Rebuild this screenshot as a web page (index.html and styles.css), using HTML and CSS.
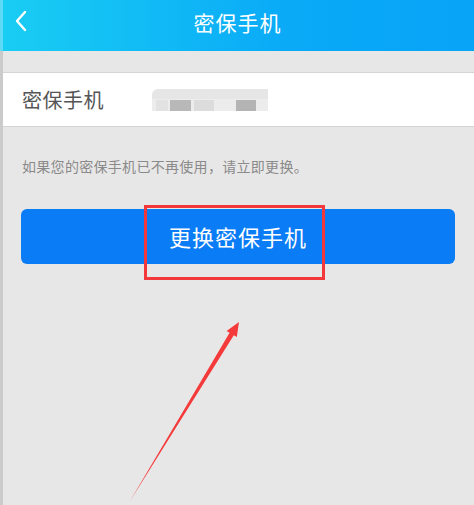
FILE: index.html
```html
<!DOCTYPE html>
<html>
    <head>
        <title>密保手机</title>
        <meta charset="UTF-8">
        <link rel="stylesheet" href="styles.css">
    </head>
    <body>
        <div class="page">
            <div class="header">
                <svg class="back" width="14" height="22" viewBox="0 0 14 22">
                    <polyline points="11,2 3,11 11,20" fill="none" stroke="#fff" stroke-width="2.4" stroke-linecap="round" stroke-linejoin="round"/>
                </svg>
                <span class="title">密保手机</span>
            </div>
            <div class="content">
                <div class="row">
                    <span class="label">密保手机</span>
                    <span class="blur"><i class="b1"></i><i class="b2"></i><i class="b3"></i><i class="b4"></i></span>
                </div>
                <p class="tip">如果您的密保手机已不再使用，请立即更换。</p>
                <button class="change">更换密保手机</button>
            </div>
            <!-- annotation drawn over the screenshot -->
            <svg class="marks" width="474" height="505" viewBox="0 0 474 505">
                <rect x="145.5" y="206.5" width="178" height="72" fill="none" stroke="#f2383b" stroke-width="3"/>
                <polygon points="130,501 229.6,332.7 226.6,330.9 239,322 236.8,337.1 233.8,335.3" fill="#f43a3a"/>
            </svg>
        </div>
    </body>
</html>
```
FILE: styles.css
```css
body {
    margin: 0;
    font-family: "Noto Sans CJK SC", "Noto Sans", sans-serif;
}
.page {
    position: relative;
    width: 474px;
    height: 505px;
    overflow: hidden;
    background-color: #e8e7e7;
}
.header {
    height: 51px;
    display: flex;
    align-items: center;
    justify-content: center;
    position: relative;
    background: linear-gradient(to right, #19cdf3, #0aaaf7 60%, #08a4f8);
    border-left: 3px solid #5ed9f6;
    box-sizing: border-box;
    padding-bottom: 7px;
}
.back {
    position: absolute;
    left: 11px;
    top: 10px;
}
.title {
    color: #fff;
    font-size: 21px;
    letter-spacing: 1px;
    margin-left: -2px;
}
.content {
    border-left: 3px solid #cbcbcb;
    height: 454px;
    box-sizing: border-box;
    padding-top: 21px;
}
.row {
    background-color: #fff;
    border-top: 1px solid #d4d4d4;
    border-bottom: 1px solid #d4d4d4;
    height: 53px;
    display: flex;
    align-items: center;
    padding-left: 19px;
}
.label {
    font-size: 20px;
    color: #555;
    width: 130px;
    letter-spacing: 0.5px;
}
.blur {
    display: flex;
    height: 22px;
    width: 116px;
    background: linear-gradient(to bottom, #e6e6e6 45%, #ececec 45%);
    border-radius: 6px 0 0 0;
    position: relative;
}
.blur i {
    position: absolute;
    bottom: 0;
    height: 11px;
    background-color: #b8b8b8;
}
.blur .b1 { left: 18px; width: 21px; }
.blur .b2 { left: 42px; width: 20px; background-color: #dcdcdc; }
.blur .b3 { left: 84px; width: 20px; background-color: #b4b4b4; }
.blur .b4 { left: 4px; width: 12px; background-color: #e2e2e2; }
.tip {
    margin: 29px 0 0 19px;
    font-size: 14px;
    color: #8a8a8a;
    letter-spacing: 0.3px;
}
.change {
    display: block;
    margin: 33px 0 0 18px;
    width: 434px;
    height: 55px;
    border: none;
    border-radius: 6px;
    background-color: #0a7cf6;
    color: #fff;
    font-family: "Noto Sans CJK SC", "Noto Sans", sans-serif;
    font-size: 22px;
    letter-spacing: 1px;
    padding: 0 0 2px 0;
}
.marks {
    position: absolute;
    left: 0;
    top: 0;
    pointer-events: none;
}
```
